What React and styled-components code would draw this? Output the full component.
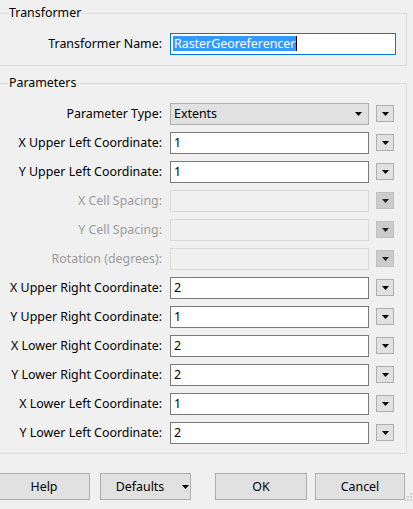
import React from 'react';
import styled, { createGlobalStyle } from 'styled-components';

const GlobalStyle = createGlobalStyle`
  html, body {
    margin: 0;
    padding: 0;
    background: #f0f0f0;
  }
  body {
    font-family: "Segoe UI", "Noto Sans", "Open Sans", sans-serif;
    font-size: 12.4px;
    color: #000;
    overflow: hidden;
  }
`;

const Dialog = styled.div`
  width: 413px;
  height: 509px;
  padding-top: 5px;
  box-sizing: border-box;
  position: relative;
`;

const Group = styled.fieldset`
  margin: 0 6px ${p => p.$gap || 0}px -1px;
  padding: ${p => p.$pad};
  border: 1px solid #dcdcdc;
  min-width: 0;
`;

const Legend = styled.legend`
  margin-left: 8px;
  padding: 0 1px;
  line-height: 16px;
  height: 16px;
`;

const Form = styled.div`
  display: grid;
  grid-template-columns: 162px 199px 18px;
  column-gap: 8px;
  grid-auto-rows: 29px;
  align-items: center;
`;

const Label = styled.span`
  text-align: right;
  white-space: nowrap;
  color: ${p => (p.$disabled ? '#9a9a9a' : '#000')};
`;

const Field = styled.div`
  height: 22px;
  box-sizing: border-box;
  border: 1px solid ${p => (p.$disabled ? '#d9d9d9' : '#7a7a7a')};
  background: ${p => (p.$disabled ? '#f0f0f0' : '#fff')};
  padding: 0 3px;
  display: flex;
  align-items: center;
  line-height: 20px;
`;

const NameField = styled(Field)`
  grid-column: 2 / -1;
  margin-right: -1px;
  border-color: #0078d7;
  padding-left: 2px;
`;

const Selection = styled.span`
  background: #3399ff;
  color: #fff;
  line-height: 15px;
  padding: 0 1px;
  border-right: 1px solid #000;
`;

const Combo = styled.div`
  height: 22px;
  box-sizing: border-box;
  border: 1px solid #adadad;
  background: #e1e1e1;
  display: flex;
  align-items: center;
  justify-content: space-between;
  padding: 0 6px 0 3px;
`;

const MenuButton = styled.div`
  width: 18px;
  height: 17px;
  box-sizing: border-box;
  border: 1px solid ${p => (p.$disabled ? '#bfbfbf' : '#adadad')};
  background: ${p => (p.$disabled ? '#cccccc' : '#e1e1e1')};
  display: flex;
  align-items: center;
  justify-content: center;
  margin-left: -1px;
`;

const Footer = styled.div`
  display: flex;
  margin-top: 19px;
  margin-left: -2px;
`;

const PushButton = styled.div`
  width: ${p => p.$w || 92}px;
  height: 27px;
  box-sizing: border-box;
  border: 1px solid #adadad;
  background: #e1e1e1;
  display: flex;
  align-items: center;
  justify-content: center;
  gap: 18px;
  margin-right: ${p => p.$gap || 0}px;
  padding-left: ${p => p.$indent || 0}px;
`;

const Grip = styled.svg`
  position: absolute;
  right: 0;
  bottom: 5px;
`;

const Arrow = ({ color = '#000' }) => (
  <svg width="7" height="4" viewBox="0 0 7 4">
    <path d="M0 0h7L3.5 4z" fill={color} />
  </svg>
);

const rows = [
  { label: 'X Upper Left Coordinate:', value: '1' },
  { label: 'Y Upper Left Coordinate:', value: '1' },
  { label: 'X Cell Spacing:', disabled: true },
  { label: 'Y Cell Spacing:', disabled: true },
  { label: 'Rotation (degrees):', disabled: true },
  { label: 'X Upper Right Coordinate:', value: '2' },
  { label: 'Y Upper Right Coordinate:', value: '1' },
  { label: 'X Lower Right Coordinate:', value: '2' },
  { label: 'Y Lower Right Coordinate:', value: '2' },
  { label: 'X Lower Left Coordinate:', value: '1' },
  { label: 'Y Lower Left Coordinate:', value: '2' },
];

export default function App() {
  return (
    <Dialog>
      <GlobalStyle />
      <Group $pad="8px 0 7px 0" $gap={9}>
        <Legend>Transformer</Legend>
        <Form>
          <Label>Transformer Name:</Label>
          <NameField>
            <Selection>RasterGeoreferencer</Selection>
          </NameField>
        </Form>
      </Group>
      <Group $pad="8px 0 6px 0">
        <Legend>Parameters</Legend>
        <Form>
          <Label>Parameter Type:</Label>
          <Combo>
            <span>Extents</span>
            <Arrow />
          </Combo>
          <MenuButton>
            <Arrow />
          </MenuButton>
          {rows.map(r => (
            <React.Fragment key={r.label}>
              <Label $disabled={r.disabled}>{r.label}</Label>
              <Field $disabled={r.disabled}>{r.value}</Field>
              <MenuButton $disabled={r.disabled}>
                <Arrow color={r.disabled ? '#222' : '#000'} />
              </MenuButton>
            </React.Fragment>
          ))}
        </Form>
      </Group>
      <Footer>
        <PushButton $gap={10}>Help</PushButton>
        <PushButton $w={91} $gap={24} $indent={14}>
          <span>Defaults</span>
          <Arrow />
        </PushButton>
        <PushButton $gap={8}>OK</PushButton>
        <PushButton $w={90}>Cancel</PushButton>
      </Footer>
      <Grip width="9" height="11" viewBox="0 0 9 11">
        <g fill="#d0d0d0">
          <rect x="6" y="0" width="2" height="2" />
          <rect x="3" y="3" width="2" height="2" />
          <rect x="6" y="3" width="2" height="2" />
          <rect x="0" y="6" width="2" height="2" />
          <rect x="3" y="6" width="2" height="2" />
          <rect x="6" y="6" width="2" height="2" />
        </g>
      </Grip>
    </Dialog>
  );
}
